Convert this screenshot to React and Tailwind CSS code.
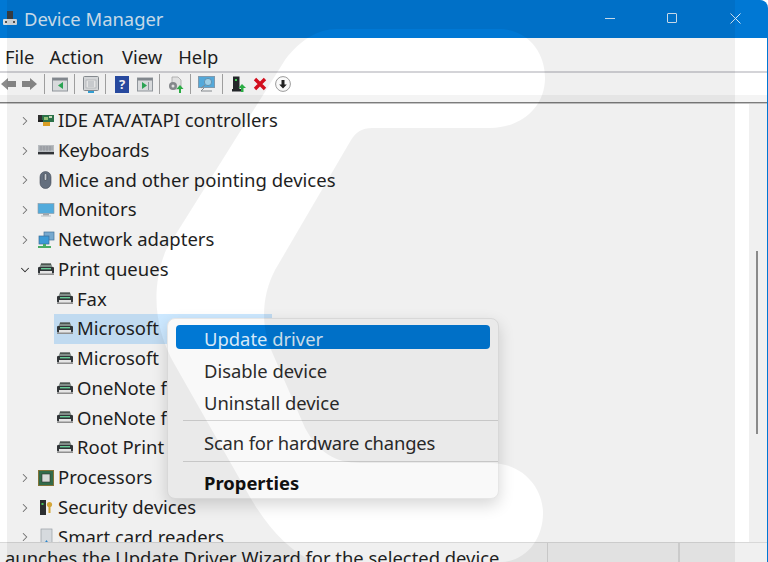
import { ChevronRight, ChevronDown } from "lucide-react";

const font = { fontFamily: "'Noto Sans', sans-serif" };

function Printer() {
  return (
    <svg width="18" height="16" viewBox="0 0 18 16">
      <path d="M4 1.500h10l1.500 3.500H2.500z" fill="#8b9792" />
      <rect x="4" y="1.500" width="10" height="1.400" fill="#4a5550" />
      <rect x="1" y="5" width="16" height="6.500" rx="1" fill="#33383b" />
      <rect x="4" y="6" width="10" height="1.400" fill="#6fd8a0" />
      <rect x="3" y="9" width="12" height="3.500" fill="#f4f4f4" />
      <rect x="1" y="11.500" width="16" height="1.500" fill="#9a9a9a" />
    </svg>
  );
}

function IdeIcon() {
  return (
    <svg width="18" height="16" viewBox="0 0 18 16">
      <rect x="1" y="2" width="5" height="5" fill="#333" />
      <rect x="5" y="2" width="12" height="7" fill="#2f7a4f" />
      <rect x="7" y="4" width="4" height="3" fill="#9fd07f" />
      <rect x="12" y="3" width="3" height="2" fill="#d8e8c8" />
      <rect x="1" y="7" width="5" height="2" fill="#222" />
      <rect x="6" y="9" width="7" height="4" fill="#e8a828" />
    </svg>
  );
}

function KeyboardIcon() {
  return (
    <svg width="18" height="16" viewBox="0 0 18 16">
      <rect x="1" y="2" width="16" height="7" fill="#c4c8cc" />
      <path d="M2 4h14M2 6h14M4 3v5M7 3v5M10 3v5M13 3v5" stroke="#8d9297" strokeWidth="0.6" />
      <rect x="1" y="9" width="16" height="2.400" fill="#33373b" />
    </svg>
  );
}

function MouseIcon() {
  return (
    <svg width="18" height="18" viewBox="0 0 18 18">
      <rect x="3" y="0.500" width="11" height="17" rx="5.500" fill="#6b7686" stroke="#4a5260" strokeWidth="0.6" />
      <rect x="7.200" y="2.500" width="2.600" height="7" rx="1.300" fill="#d5dae0" stroke="#333a44" strokeWidth="0.6" />
    </svg>
  );
}

function MonitorIcon() {
  return (
    <svg width="18" height="16" viewBox="0 0 18 16">
      <rect x="1" y="1.500" width="16" height="10" fill="#58b6ea" stroke="#9aa4ac" strokeWidth="0.6" />
      <rect x="6" y="11.500" width="6" height="2" fill="#a8b0b6" />
      <rect x="4" y="13.500" width="10" height="1" fill="#c4c9cd" />
    </svg>
  );
}

function NetworkIcon() {
  return (
    <svg width="18" height="18" viewBox="0 0 18 18">
      <rect x="7" y="1" width="10" height="8" fill="#7fb4dc" stroke="#4a7ca4" strokeWidth="0.7" />
      <rect x="2" y="5" width="10" height="8" fill="#3fa4e4" stroke="#3f74a0" strokeWidth="0.7" />
      <rect x="1" y="15" width="13" height="2" fill="#4eb86a" />
      <rect x="6" y="13" width="3" height="2" fill="#4eb86a" />
    </svg>
  );
}

function CpuIcon() {
  return (
    <svg width="18" height="18" viewBox="0 0 18 18">
      <rect x="1.500" y="1.500" width="15" height="15" fill="#36724f" stroke="#8d7b3c" strokeWidth="1" />
      <rect x="5" y="5" width="8" height="8" fill="#e6e8e6" stroke="#333" strokeWidth="0.6" />
    </svg>
  );
}

function SecurityIcon() {
  return (
    <svg width="18" height="18" viewBox="0 0 18 18">
      <rect x="3" y="1" width="6" height="15" fill="#2e3134" />
      <rect x="4.500" y="4" width="2" height="2" fill="#4fd05f" />
      <circle cx="12.500" cy="5.500" r="2.600" fill="#e2b13c" />
      <rect x="11.500" y="7" width="2" height="7" fill="#e2b13c" />
    </svg>
  );
}

function CardIcon() {
  return (
    <svg width="18" height="18" viewBox="0 0 18 18">
      <rect x="4" y="1" width="11" height="16" fill="#e4e8ec" stroke="#a0a8b0" strokeWidth="0.7" />
      <path d="M6 17l3.500-5 3.500 5z" fill="#2d8ed8" />
    </svg>
  );
}

function TreeRow({ level = 1, open, icon, label, selected, wide }) {
  return (
    <div className={`flex h-[29.75px] items-center ${level === 1 ? "pl-[18px]" : "pl-[54px]"}`}>
      {level === 1 &&
        (open ? (
          <ChevronDown size={14} strokeWidth={1.8} className="mr-[3px] w-[14px] text-[#333]" />
        ) : (
          <ChevronRight size={14} strokeWidth={1.8} className="mr-[3px] w-[14px] text-[#777]" />
        ))}
      <div className={`flex h-full items-center ${selected ? "w-[218px] bg-[#cce8ff]" : ""}`}>
        <span className="ml-[2px] flex w-[21px] shrink-0 items-center">{icon}</span>
        <span className={`mb-[2px] whitespace-nowrap ${wide ? "[word-spacing:4px]" : ""}`}>{label}</span>
      </div>
    </div>
  );
}

function Sep({ ml }) {
  return <span className={`h-[20px] w-[1px] shrink-0 bg-[#a8a8a8] ${ml}`} />;
}

function ToolWindow({ children }) {
  return (
    <svg width="16" height="16" viewBox="0 0 16 16">
      <rect x="0.500" y="2" width="15" height="13" fill="#e6e8ea" stroke="#9aa0a6" />
      <rect x="0.500" y="2" width="15" height="2.500" fill="#8a9096" />
      {children}
    </svg>
  );
}

function Toolbar() {
  return (
    <div className="flex h-[22px] items-center">
      <svg className="ml-[1px]" width="15" height="14" viewBox="0 0 15 14">
        <path d="M0 7l7-6v3h8v6H7v3z" fill="#8c8c8c" />
      </svg>
      <svg className="ml-[6px]" width="15" height="14" viewBox="0 0 15 14">
        <path d="M15 7L8 1v3H0v6h8v3z" fill="#8c8c8c" />
      </svg>
      <Sep ml="ml-[7px]" />
      <span className="ml-[7px] flex">
        <ToolWindow>
          <path d="M11 6v7L6 9.500z" fill="#2fae5a" />
        </ToolWindow>
      </span>
      <Sep ml="ml-[6px]" />
      <svg className="ml-[8px]" width="16" height="17" viewBox="0 0 16 17">
        <rect x="0.500" y="0.500" width="15" height="14" rx="1" fill="#e2e4e6" stroke="#8d9297" />
        <rect x="3" y="4" width="10" height="8" fill="#f4f5f6" stroke="#a8adb2" strokeWidth="0.6" />
        <path d="M5 6h6M5 8h6M5 10h6" stroke="#9aa0a6" strokeWidth="0.7" />
        <rect x="5" y="15" width="6" height="2" fill="#35a8e0" />
      </svg>
      <Sep ml="ml-[6px]" />
      <span className="ml-[9px] flex h-[17px] w-[14px] items-center justify-center bg-[#2a4ea8] text-[13px] font-bold leading-none text-white">
        ?
      </span>
      <span className="ml-[8px] flex">
        <ToolWindow>
          <path d="M5 6v7l5-3.500z" fill="#2fae5a" />
          <path d="M11.500 6v8" stroke="#9aa0a6" />
        </ToolWindow>
      </span>
      <Sep ml="ml-[6px]" />
      <svg className="ml-[7px]" width="17" height="17" viewBox="0 0 17 17">
        <path d="M5 1h6l3 3v9H5z" fill="#f0f0f0" stroke="#a8a8a8" strokeWidth="0.7" />
        <circle cx="6" cy="10" r="4" fill="#8d9094" />
        <circle cx="6" cy="10" r="1.500" fill="#eee" />
        <path d="M12 17v-4H9.500L13 9l3.500 4H14v4z" fill="#2fb84a" />
      </svg>
      <Sep ml="ml-[6px]" />
      <svg className="ml-[7px]" width="17" height="16" viewBox="0 0 17 16">
        <rect x="0.500" y="0.500" width="16" height="11" fill="#5ab4e8" stroke="#8aa4b8" />
        <circle cx="10" cy="6" r="3.600" fill="#a8dcf6" stroke="#5f8aa8" strokeWidth="0.7" />
        <path d="M7 9l-4 3M6 12l-3 3h11" stroke="#8d9297" fill="none" />
      </svg>
      <Sep ml="ml-[7px]" />
      <svg className="ml-[9px]" width="14" height="16" viewBox="0 0 14 16">
        <rect x="1" y="0.500" width="6.500" height="13" fill="#26292c" />
        <rect x="3" y="3" width="2" height="2" fill="#46d85a" />
        <rect x="0" y="13" width="9" height="2.500" fill="#26292c" />
        <path d="M9 16v-4H6.500L10 8l4 4h-2.500v4z" fill="#2fb84a" />
      </svg>
      <svg className="ml-[7px]" width="14" height="14" viewBox="0 0 14 14">
        <path d="M2 2l10 10M12 2L2 12" stroke="#e01020" strokeWidth="3.400" />
      </svg>
      <svg className="ml-[8px]" width="16" height="16" viewBox="0 0 16 16">
        <circle cx="8" cy="8" r="7.400" fill="#fafafa" stroke="#9a9a9a" />
        <path d="M8 12.500L4.200 8.500H6.500V4h3v4.500h2.300z" fill="#222" />
      </svg>
    </div>
  );
}

function ContextMenu() {
  return (
    <div className="absolute left-[167px] top-[318px] h-[181px] w-[332px] rounded-[8px] border border-[#e6e6e6] bg-[#f9f9f9] px-[8px] pt-[6px] text-[18.4px] text-[#2b2b2b] shadow-[0_6px_16px_rgba(0,0,0,0.16)]">
      <div className="h-[24px] overflow-hidden rounded-[4px] bg-[#0078d4] pl-[28px] leading-[28px] text-[#d6e9f8]">
        Update driver
      </div>
      <div className="mt-[6px] flex h-[32px] items-center pl-[28px]">Disable device</div>
      <div className="flex h-[32px] items-center pl-[28px]">Uninstall device</div>
      <div className="ml-[7px] mt-[1px] h-[1px] w-[315px] bg-[#d4d4d4]" />
      <div className="flex h-[40px] items-center pl-[28px] pt-[4px] tracking-[-0.15px]">Scan for hardware changes</div>
      <div className="ml-[7px] h-[1px] w-[315px] bg-[#d4d4d4]" />
      <div className="flex h-[36px] items-center pl-[28px] pt-[6px] font-bold text-[#111]">Properties</div>
    </div>
  );
}

export default function App() {
  return (
    <div
      className="relative h-[562px] w-[768px] overflow-hidden bg-white text-[18.4px] text-[#1f1f1f]"
      style={font}
    >
      {/* Title bar */}
      <header className="flex h-[38px] items-center rounded-tr-[8px] bg-[#0078d4] text-[#d4e6f6]">
        <svg className="ml-[2px]" width="16" height="18" viewBox="0 0 16 18">
          <rect x="5" y="1" width="6" height="8" fill="#3a3f44" />
          <rect x="1" y="9" width="14" height="6" rx="1" fill="#d8dce0" />
          <rect x="3" y="11" width="2" height="2" fill="#555" />
          <rect x="11" y="11" width="2" height="2" fill="#555" />
        </svg>
        <span className="ml-[6px]">Device Manager</span>
        <div className="mb-[2px] ml-auto flex items-center">
          <span className="h-[1px] w-[10px] bg-[#d4e6f6]" />
          <span className="ml-[52px] h-[10px] w-[10px] rounded-[1px] border border-[#d4e6f6]" />
          <svg className="ml-[53px] mr-[27px]" width="11" height="11" viewBox="0 0 11 11">
            <path d="M0.500 0.500l10 10M10.500 0.500l-10 10" stroke="#d4e6f6" />
          </svg>
        </div>
      </header>

      {/* Menu bar */}
      <nav className="flex h-[35px] items-center border-b-2 border-[#d4d4d8] bg-white pl-[5px] pt-[4px]">
        <span>File</span>
        <span className="ml-[15px]">Action</span>
        <span className="ml-[18px]">View</span>
        <span className="ml-[16px]">Help</span>
      </nav>

      <Toolbar />
      <div className="h-[7px] bg-[#f4f4f4]" />
      <div className="h-[2px] border-t border-[#7c7c7c] bg-[#c4c4c4]" />

      {/* Tree and scrollbar */}
      <div className="flex h-[438px] overflow-hidden">
        <div className="flex-1 pt-[2px] text-[18.5px]">
          <TreeRow icon={<IdeIcon />} label="IDE ATA/ATAPI controllers" />
          <TreeRow icon={<KeyboardIcon />} label="Keyboards" />
          <TreeRow icon={<MouseIcon />} label="Mice and other pointing devices" />
          <TreeRow icon={<MonitorIcon />} label="Monitors" />
          <TreeRow icon={<NetworkIcon />} label="Network adapters" />
          <TreeRow open icon={<Printer />} label="Print queues" />
          <TreeRow level={2} icon={<Printer />} label="Fax" />
          <TreeRow level={2} selected wide icon={<Printer />} label="Microsoft Print to PDF" />
          <TreeRow level={2} wide icon={<Printer />} label="Microsoft XPS Document Writer" />
          <TreeRow level={2} icon={<Printer />} label="OneNote for Windows 10" />
          <TreeRow level={2} icon={<Printer />} label="OneNote for Windows" />
          <TreeRow level={2} icon={<Printer />} label="Root Print Queue" />
          <TreeRow icon={<CpuIcon />} label="Processors" />
          <TreeRow icon={<SecurityIcon />} label="Security devices" />
          <TreeRow icon={<CardIcon />} label="Smart card readers" />
        </div>
        <div className="flex w-[19px] shrink-0 flex-col bg-[#f0f0f0] pl-[7px] pr-[10px] pt-[147px]">
          <div className="h-[183px] w-[2px] bg-[#8a8a8a]" />
        </div>
      </div>

      {/* Status bar */}
      <footer className="flex h-[20px] overflow-hidden border-t border-[#d8d8d8] bg-[#f0f0f0]">
        <span className="w-[548px] whitespace-nowrap border-r border-[#d4d4d4] pl-[5px] leading-[30px]">
          aunches the Update Driver Wizard for the selected device
        </span>
        <span className="w-[132px] border-r-2 border-[#d8d8d8]" />
      </footer>

      <ContextMenu />

      {/* Watermark logo over the whole shot */}
      <svg className="pointer-events-none absolute left-0 top-0" width="768" height="562" viewBox="0 0 768 562">
        <path
          fillRule="evenodd"
          fill="#000"
          fillOpacity="0.06"
          d="M7 0H735V562H7Z M337 29L498 29C528 29 545 52 545 78C545 108 520 128 490 128L372 128C362 128 356 132 351 140L275 270C262 295 260 325 272 352L305 428C318 452 335 463 360 463L490 463C525 463 543 490 543 513C543 540 525 562 500 562L315 562C290 552 268 528 250 497L175 365C155 330 150 290 166 250L285 60C300 40 318 29 337 29Z"
        />
      </svg>

      {/* Window edge */}
      <div className="absolute right-0 top-[38px] h-[524px] w-[1px] bg-[#0078d4]" />
    </div>
  );
}
